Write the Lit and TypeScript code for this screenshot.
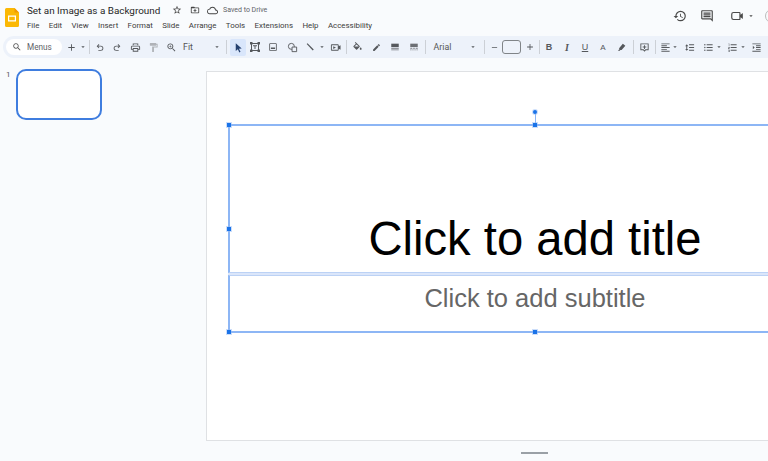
import { LitElement, html, css, svg } from "lit";
import { customElement } from "lit/decorators.js";

const P: Record<string, any> = {
  search: svg`<path d="M15.5 14h-.79l-.28-.27C15.41 12.59 16 11.11 16 9.5 16 5.91 13.09 3 9.5 3S3 5.91 3 9.5 5.91 16 9.5 16c1.61 0 3.09-.59 4.23-1.57l.27.28v.79l5 4.99L20.49 19l-4.99-5zm-6 0C7.01 14 5 11.99 5 9.5S7.01 5 9.5 5 14 7.01 14 9.5 11.99 14 9.5 14z"/>`,
  plus: svg`<path d="M19 13h-6v6h-2v-6H5v-2h6V5h2v6h6z"/>`,
  minus: svg`<path d="M5 11h14v2H5z"/>`,
  caret: svg`<path d="M7 10l5 5 5-5z"/>`,
  undo: svg`<path d="M9 4 4 9l5 5 1.4-1.4L7.8 10H14a4 4 0 0 1 0 8H8v2h6a6 6 0 0 0 0-12H7.8l2.6-2.6z" transform="translate(0 1)"/>`,
  redo: svg`<path d="M15 4l5 5-5 5-1.4-1.4 2.6-2.6H10a4 4 0 0 0 0 8h6v2h-6a6 6 0 0 1 0-12h6.2l-2.6-2.6z" transform="translate(0 1)"/>`,
  print: svg`<path d="M19 8H5c-1.66 0-3 1.34-3 3v6h4v4h12v-4h4v-6c0-1.66-1.34-3-3-3zm-1 7v-2H6v2H4v-4c0-.55.45-1 1-1h14c.55 0 1 .45 1 1v4zm-2 4H8v-4h8zM18 3H6v4h2V5h8v2h2z"/>`,
  paint: svg`<path d="M18 4V3c0-.55-.45-1-1-1H5c-.55 0-1 .45-1 1v4c0 .55.45 1 1 1h12c.55 0 1-.45 1-1V6h1v4H9v11c0 .55.45 1 1 1h2c.55 0 1-.45 1-1v-9h8V4h-3z"/>`,
  zoom: svg`<path d="M15.5 14h-.79l-.28-.27C15.41 12.59 16 11.11 16 9.5 16 5.91 13.09 3 9.5 3S3 5.91 3 9.5 5.91 16 9.5 16c1.61 0 3.09-.59 4.23-1.57l.27.28v.79l5 4.99L20.49 19l-4.99-5zm-6 0C7.01 14 5 11.99 5 9.5S7.01 5 9.5 5 14 7.01 14 9.5 11.99 14 9.5 14z"/><path d="M7 9h5v1.2H7z"/><path d="M8.9 7h1.2v5H8.9z"/>`,
  cursor: svg`<path d="M6 2.5 19 14l-6 .6 3.4 6.9-2.6 1.2-3.2-7L6 19.5z"/>`,
  textbox: svg`<path d="M2 2h5v2h10V2h5v5h-2v10h2v5h-5v-2H7v2H2v-5h2V7H2zm4 5v10h1v1h10v-1h1V7h-1V6H7v1zM8 8.5h8v2h-3V16h-2v-5.5H8z"/>`,
  image: svg`<path d="M5 3h14a2 2 0 0 1 2 2v14a2 2 0 0 1-2 2H5a2 2 0 0 1-2-2V5a2 2 0 0 1 2-2zm0 2v14h14V5zm2 8h10v4H7z"/>`,
  shape: svg`<circle cx="9.5" cy="9.5" r="6.5" fill="none" stroke="currentColor" stroke-width="2"/><path d="M11 11h10v10H11z" fill="#edf2fa" stroke="currentColor" stroke-width="2"/>`,
  line: svg`<path d="M4 5l2-2 15 15-2.4 2.4z"/>`,
  video: svg`<path d="M4 5h13a2 2 0 0 1 2 2v2.5L23 7v10l-4-2.500V17a2 2 0 0 1-2 2H4a2 2 0 0 1-2-2V7a2 2 0 0 1 2-2zm0 2v10h13V7zm3 2 6 3-6 3z"/>`,
  fill: svg`<path d="M16.56 8.94 7.62 0 6.21 1.41l2.38 2.38-5.15 5.15c-.59.59-.59 1.54 0 2.12l5.5 5.5c.29.29.68.44 1.06.44s.77-.15 1.06-.44l5.5-5.5c.59-.58.59-1.53 0-2.12zM5.21 10 10 5.210 14.790 10H5.210zM19 11.500s-2 2.170-2 3.500c0 1.100.9 2 2 2s2-.9 2-2c0-1.330-2-3.500-2-3.500z"/>`,
  pen: svg`<path d="M3 17.250V21h3.750L17.810 9.940l-3.750-3.750L3 17.250zM20.710 7.040a1 1 0 0 0 0-1.410l-2.340-2.340a1 1 0 0 0-1.410 0l-1.830 1.830 3.750 3.750 1.830-1.830z"/>`,
  weight: svg`<path d="M3 4h18v8H3z"/><path d="M3 14h18v2H3zM3 18h18v2H3z" opacity=".8"/>`,
  dash: svg`<path d="M3 4h18v8H3z" opacity=".85"/><path d="M3 14h5v2H3zM10 14h4v2h-4zM16 14h5v2h-5zM3 18h3v2H3zM8 18h3v2H8zM13 18h3v2h-3zM18 18h3v2h-3z" opacity=".75"/>`,
  marker: svg`<path d="M5 15l9-11 6 5-9 10H6zM2 21l3-3 3 2-1 1z"/>`,
  comment: svg`<path d="M3 3h18v15h-6l-3 3-3-3H3zm2 2v11h5l2 2 2-2h5V5zm6 2h2v3h3v2h-3v3h-2v-3H8v-2h3z"/>`,
  align: svg`<path d="M3 3h18v2H3zM3 7h12v2H3zM3 11h18v2H3zM3 15h12v2H3zM3 19h18v2H3z"/>`,
  spacing: svg`<path d="M6 5 2.500 9H5v6H2.500L6 19l3.500-4H7V9h2.500zM11 5h11v2H11zM11 11h11v2H11zM11 17h11v2H11z"/>`,
  list: svg`<path d="M8 5h13v2H8zM8 11h13v2H8zM8 17h13v2H8z"/><circle cx="4" cy="6" r="1.500"/><circle cx="4" cy="12" r="1.500"/><circle cx="4" cy="18" r="1.500"/>`,
  numlist: svg`<path d="M8 5h13v2H8zM8 11h13v2H8zM8 17h13v2H8zM3 3h2v6H4V4H3zM2.500 11H6v1l-2 2h2v1H2.500v-1l2-2h-2zM2.500 17H6v5H2.500v-1H5v-1H3v-1h2v-1H2.500z"/>`,
  indent: svg`<path d="M3 3h18v2H3zM11 7h10v2H11zM11 11h10v2H11zM11 15h10v2H11zM3 19h18v2H3zM8 12 4 8v8z"/>`,
};

type Item = { c: number; w: number; k: string; v?: string };
const I = (c: number, v: string, w = 12): Item => ({ c, w, k: "icon", v });
const D = (c: number): Item => ({ c, w: 8, k: "caret" });
const S = (c: number): Item => ({ c, w: 1, k: "sep" });
const T = (c: number, w: number, v: string, k = "text"): Item => ({ c, w, k, v });

const ITEMS: Item[] = [
  I(71, "plus", 11), D(83), S(89), I(100, "undo", 10), I(117, "redo", 10), I(135, "print", 11),
  T(153, 11, "paint", "dim"), I(171, "zoom", 11), T(188, 12, "Fit"), D(217), S(226),
  T(238, 16, "cursor", "active"), I(255, "textbox", 12), I(273, "image", 10), I(292, "shape", 11),
  I(310, "line", 10), D(322), I(335, "video", 11), S(346), I(357, "fill", 11), I(376, "pen", 9),
  I(395, "weight", 10), I(414, "dash", 10), S(425), T(442.500, 20, "Arial"), D(473), S(484),
  I(494, "minus", 9), T(511.500, 19, "", "size"), I(530, "plus", 10), S(539),
  T(549, 10, "B", "bold"), T(567, 10, "I", "ital"), T(585, 10, "U", "under"), T(603, 10, "A", "atext"),
  I(622, "marker", 10), S(633), I(644, "comment", 11), S(655), I(665, "align", 11), D(675),
  I(689, "spacing", 11), I(708, "list", 11), D(719), I(732, "numlist", 11), D(743), I(756, "indent", 11),
];

const MENUS = ["File", "Edit", "View", "Insert", "Format", "Slide", "Arrange", "Tools", "Extensions", "Help", "Accessibility"];

const icon = (name: string) => html`<svg viewBox="0 0 24 24" fill="currentColor">${P[name]}</svg>`;

@customElement("app-root")
export class AppRoot extends LitElement {
  static styles = css`
    :host { display: flex; flex-direction: column; width: 768px; height: 461px; overflow: hidden; background: #f9fbfd; font-family: Roboto, "Liberation Sans", sans-serif; color: #444746; position: relative; }
    svg { display: block; }
    .head { height: 36px; flex: none; display: flex; position: relative; }
    .logo { margin: 8px 0 0 5px; width: 14px; height: 19px; flex: none; }
    .titles { margin-left: 8px; flex: 1; min-width: 0; }
    .row1 { display: flex; align-items: center; height: 14px; margin-top: 3px; }
    .doc { font-size: 9.900px; color: #1f1f1f; width: 145px; white-space: nowrap; }
    .h1 { width: 10px; height: 10px; color: #444; flex: none; }
    .folder { margin-left: 8px; }
    .cloud { margin-left: 7px; width: 11px; height: 11px; }
    .saved { margin-left: 5px; font-size: 7px; color: #5f6368; white-space: nowrap; }
    .menus { display: flex; gap: 9.400px; margin-top: 3px; font-size: 7.900px; line-height: 11px; color: #3c3c3c; white-space: nowrap; }
    .right { position: absolute; top: 9px; left: 0; right: 0; height: 14px; }
    .right-row { display: flex; align-items: center; justify-content: flex-end; height: 14px; margin-right: -11px; }
    .r { width: 14px; height: 14px; color: #4a4a4a; flex: none; }
    .r.hist { margin-right: 13px; }
    .r.cm { margin-right: 16px; }
    .r.cam { margin-right: 3px; }
    .r.dd { width: 8px; height: 8px; margin-right: 10px; }
    .avatar { width: 14px; height: 14px; border: 1px solid #bbb; border-radius: 50%; box-sizing: border-box; flex: none; }

    .bar { height: 22px; margin-left: 3px; flex: none; background: #edf2fa; border-radius: 11px 0 0 11px; display: flex; align-items: center; }
    .pill { margin-left: 3px; width: 56px; height: 16px; flex: none; background: #fff; border-radius: 8px; display: flex; align-items: center; font-size: 8.200px; color: #5f6368; box-sizing: border-box; padding-left: 6px; gap: 5px; }
    .pill svg { width: 10px; height: 10px; color: #555; }
    .it { flex: none; display: flex; align-items: center; justify-content: center; color: #55585c; white-space: nowrap; }
    .it svg { width: 100%; }
    .icon { height: 14px; }
    .caret { height: 8px; }
    .sep { height: 14px; background: #ccd0d6; }
    .text { font-size: 8.800px; color: #555; height: 14px; }
    .dim { height: 14px; color: #b0b3b8; }
    .active { height: 17px; background: #d9e6fb; border-radius: 2px; color: #24406f; }
    .active svg { width: 11px; height: 11px; }
    .size { height: 14px; border: 1px solid #808488; border-radius: 3px; box-sizing: border-box; }
    .bold, .ital, .under, .atext { height: 14px; font-family: "Liberation Sans", sans-serif; font-size: 9px; color: #55585c; }
    .bold { font-weight: 700; }
    .ital { font-style: italic; font-weight: 700; font-family: "Liberation Serif", serif; font-size: 10px; }
    .under { text-decoration: underline; }
    .atext { font-size: 8px; }

    .main { flex: 1; display: flex; min-height: 0; }
    .side { width: 206px; flex: none; display: flex; align-items: flex-start; padding: 11px 0 0 6px; box-sizing: border-box; }
    .num { width: 10px; font-size: 8px; line-height: 12px; color: #555; }
    .thumb { width: 86px; height: 51px; box-sizing: border-box; background: #fff; border: 2px solid #3f7ddf; border-radius: 10px; }
    .stagewrap { flex: 1; min-width: 0; padding-top: 13px; }
    .slide { height: 370px; background: #fff; border: 1px solid #dfe1e4; border-right: 0; box-sizing: border-box; position: relative; overflow: hidden; }
    .box { position: absolute; left: 21px; width: 614px; box-sizing: border-box; border: 2px solid #8db6f5; display: flex; justify-content: center; font-family: "Liberation Sans", Arial, sans-serif; white-space: nowrap; }
    .t { top: 52px; height: 149px; align-items: flex-end; font-size: 47.200px; color: #000; line-height: 54px; padding-bottom: 6px; border-bottom: 1px solid #bcd2f5; }
    .s { top: 203px; height: 58px; font-size: 25.500px; color: #666; line-height: 30px; padding-top: 7px; border-top: 1px solid #bcd2f5; box-shadow: 0 -2px 0 #dbe6fa; }
    .h { position: absolute; width: 4px; height: 4px; background: #1a73e8; box-shadow: 0 0 0 1px rgba(141, 182, 245, .45); }
    .h1a { left: 20px; top: 51px; } .h2a { left: 326px; top: 51px; } .h3a { left: 20px; top: 155px; } .h4a { left: 20px; top: 258px; } .h5a { left: 326px; top: 258px; }
    .rot { left: 326px; top: 38px; border-radius: 50%; }
    .stem { position: absolute; left: 327.500px; top: 42px; width: 1px; height: 11px; background: #8db6f5; }
    .grip { position: absolute; left: 521px; top: 452px; width: 27px; height: 2px; background: #9aa0a6; }
  `;

  render() {
    let x = 62;
    return html`
      <div class="head">
        <svg class="logo" viewBox="0 0 14 19">
          <path d="M1.500 0H9.500L14 4.500V17.500A1.500 1.500 0 0 1 12.500 19H1.500A1.500 1.500 0 0 1 0 17.500V1.500A1.500 1.500 0 0 1 1.500 0z" fill="#fbb804"/>
          <path d="M9.500 0 14 4.500H9.500z" fill="#f09a00"/>
          <path d="M3 7.500H11V13.500H3zM4.200 8.700V12.300H9.800V8.700z" fill="#fff" fill-rule="evenodd"/>
        </svg>
        <div class="titles">
          <div class="row1">
            <div class="doc">Set an Image as a Background</div>
            <svg class="h1" viewBox="0 0 24 24" fill="currentColor">${svg`<path d="M22 9.240l-7.190-.62L12 2 9.190 8.630 2 9.240l5.460 4.730L5.820 21 12 17.270 18.180 21l-1.630-7.030L22 9.240zM12 15.400l-3.760 2.270 1-4.280-3.320-2.880 4.380-.38L12 6.100l1.710 4.040 4.380.38-3.320 2.880 1 4.280L12 15.400z"/>`}</svg>
            <svg class="h1 folder" viewBox="0 0 24 24" fill="currentColor">${svg`<path d="M4 4h6l2 2h8a2 2 0 0 1 2 2v10a2 2 0 0 1-2 2H4a2 2 0 0 1-2-2V6a2 2 0 0 1 2-2zm0 4v10h16V8zm7 1.500h2V12h2.500v2H13v2.500h-2V14H8.500v-2H11z"/>`}</svg>
            <svg class="h1 cloud" viewBox="0 0 24 24" fill="currentColor">${svg`<path d="M19.350 10.040A7.490 7.490 0 0 0 12 4C9.110 4 6.600 5.640 5.350 8.040A5.994 5.994 0 0 0 0 14c0 3.310 2.690 6 6 6h13c2.760 0 5-2.240 5-5 0-2.640-2.050-4.780-4.650-4.960zM19 18H6c-2.210 0-4-1.790-4-4s1.790-4 4-4h.71A5.500 5.500 0 0 1 12 6c2.620 0 4.880 1.860 5.390 4.430l.3 1.500 1.530.11A2.980 2.980 0 0 1 22 15c0 1.650-1.350 3-3 3z"/>`}</svg>
            <div class="saved">Saved to Drive</div>
          </div>
          <div class="menus">${MENUS.map((m) => html`<span>${m}</span>`)}</div>
        </div>
        <div class="right">
          <div class="right-row">
            <svg class="r hist" viewBox="0 0 24 24" fill="currentColor">${svg`<path d="M13 3a9 9 0 0 0-9 9H1l3.890 3.890.07.14L9 12H6c0-3.870 3.130-7 7-7s7 3.130 7 7-3.130 7-7 7c-1.930 0-3.680-.79-4.940-2.060l-1.420 1.420A8.954 8.954 0 0 0 13 21a9 9 0 0 0 0-18zm-1 5v5l4.280 2.540.72-1.210-3.500-2.080V8H12z"/>`}</svg>
            <svg class="r cm" viewBox="0 0 24 24" fill="currentColor">${svg`<path d="M21.990 4c0-1.100-.89-2-1.990-2H4c-1.100 0-2 .9-2 2v12c0 1.100.9 2 2 2h14l4 4-.01-18zM20 4v13.170L18.830 16H4V4h16zM6 12h12v2H6zm0-3h12v2H6zm0-3h12v2H6z"/>`}</svg>
            <svg class="r cam" viewBox="0 0 24 24" fill="currentColor">${svg`<path d="M6 5h10a2 2 0 0 1 2 2v3l4-3v10l-4-3v3a2 2 0 0 1-2 2H6a4 4 0 0 1-4-4V9a4 4 0 0 1 4-4zm0 2a2 2 0 0 0-2 2v6a2 2 0 0 0 2 2h10V7z"/>`}</svg>
            <svg class="r dd" viewBox="0 0 24 24" fill="currentColor">${P.caret}</svg>
            <div class="avatar"></div>
          </div>
        </div>
      </div>

      <div class="bar">
        <div class="pill">${icon("search")}<span>Menus</span></div>
        ${ITEMS.map((it) => {
          const left = it.c - it.w / 2;
          const gap = left - x;
          x = left + it.w;
          const isIcon = it.k === "icon" || it.k === "dim" || it.k === "active";
          const style = `width:${it.w}px;margin-left:${gap}px`;
          if (it.k === "caret") return html`<div class="it caret" style=${style}>${icon("caret")}</div>`;
          return html`<div class="it ${it.k}" style=${style}>${isIcon ? icon(it.v!) : it.v}</div>`;
        })}
      </div>

      <div class="main">
        <div class="side">
          <div class="num">1</div>
          <div class="thumb"></div>
        </div>
        <div class="stagewrap">
          <div class="slide">
            <div class="box t">Click to add title</div>
            <div class="box s">Click to add subtitle</div>
            <div class="stem"></div>
            <div class="h rot"></div>
            <div class="h h1a"></div><div class="h h2a"></div><div class="h h3a"></div><div class="h h4a"></div><div class="h h5a"></div>
          </div>
        </div>
      </div>
      <div class="grip"></div>
    `;
  }
}
